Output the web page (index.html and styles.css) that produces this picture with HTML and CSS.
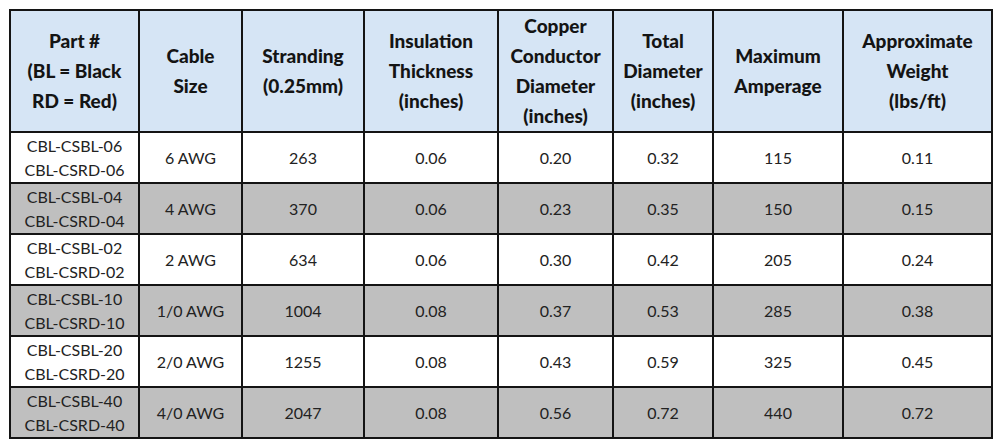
FILE: index.html
```html
<!DOCTYPE html>
<html>
<head>
<meta charset="utf-8">
<link rel="stylesheet" href="styles.css">
</head>
<body>
<div class="page">
<table class="spec">
  <colgroup>
    <col class="c1"><col class="c2"><col class="c3"><col class="c4"><col class="c5"><col class="c6"><col class="c7"><col class="c8">
  </colgroup>
  <thead>
    <tr>
      <th>Part #<br>(BL = Black<br>RD = Red)</th>
      <th>Cable<br>Size</th>
      <th>Stranding<br>(0.25mm)</th>
      <th>Insulation<br>Thickness<br>(inches)</th>
      <th>Copper<br>Conductor<br>Diameter<br>(inches)</th>
      <th>Total<br>Diameter<br>(inches)</th>
      <th>Maximum<br>Amperage</th>
      <th>Approximate<br>Weight<br>(lbs/ft)</th>
    </tr>
  </thead>
  <tbody>
    <tr>
      <td class="part">CBL-CSBL-06<br>CBL-CSRD-06</td><td>6 AWG</td><td>263</td><td>0.06</td><td>0.20</td><td>0.32</td><td>115</td><td>0.11</td>
    </tr>
    <tr class="alt">
      <td class="part">CBL-CSBL-04<br>CBL-CSRD-04</td><td>4 AWG</td><td>370</td><td>0.06</td><td>0.23</td><td>0.35</td><td>150</td><td>0.15</td>
    </tr>
    <tr>
      <td class="part">CBL-CSBL-02<br>CBL-CSRD-02</td><td>2 AWG</td><td>634</td><td>0.06</td><td>0.30</td><td>0.42</td><td>205</td><td>0.24</td>
    </tr>
    <tr class="alt">
      <td class="part">CBL-CSBL-10<br>CBL-CSRD-10</td><td>1/0 AWG</td><td>1004</td><td>0.08</td><td>0.37</td><td>0.53</td><td>285</td><td>0.38</td>
    </tr>
    <tr>
      <td class="part">CBL-CSBL-20<br>CBL-CSRD-20</td><td>2/0 AWG</td><td>1255</td><td>0.08</td><td>0.43</td><td>0.59</td><td>325</td><td>0.45</td>
    </tr>
    <tr class="alt">
      <td class="part">CBL-CSBL-40<br>CBL-CSRD-40</td><td>4/0 AWG</td><td>2047</td><td>0.08</td><td>0.56</td><td>0.72</td><td>440</td><td>0.72</td>
    </tr>
  </tbody>
</table>
</div>
</body>
</html>
```
FILE: styles.css
```css
html, body {
  margin: 0;
  padding: 0;
  background: #ffffff;
}
.page {
  padding: 9px 0 0 9px;
}
.spec {
  border-collapse: collapse;
  table-layout: fixed;
  width: 982px;
  font-family: Lato, "Open Sans", sans-serif;
  color: #1e1e1e;
}
.c1 { width: 129px; }
.c2 { width: 103px; }
.c3 { width: 122px; }
.c4 { width: 134px; }
.c5 { width: 115px; }
.c6 { width: 100px; }
.c7 { width: 130px; }
.c8 { width: 149px; }
.spec th, .spec td {
  border: 2px solid #141414;
  text-align: center;
  vertical-align: middle;
  padding: 0;
}
.spec th {
  background: #d6e5f5;
  font-weight: 900;
  font-size: 19px;
  line-height: 30px;
  height: 117px;
  color: #141414;
}
.spec td {
  background: #ffffff;
  font-size: 16px;
  line-height: 24px;
  height: 49px;
  color: #222222;
}
.spec tr.alt td {
  background: #bfbfbf;
}
```
